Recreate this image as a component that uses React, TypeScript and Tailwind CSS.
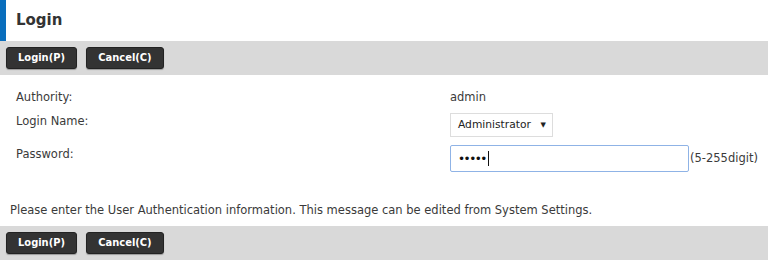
export default function App() {
  const btn =
    "h-[22px] rounded-[3px] bg-[#333333] text-white text-[11px] font-bold border border-[#222] shadow-[0_1px_1px_rgba(0,0,0,0.3)]";

  const ButtonBar = () => (
    <div className="flex items-center gap-[9px] bg-[#d9d9d9] h-[34px] px-[6px]">
      <button className={`${btn} w-[71px]`} style={{ fontFamily: '"DejaVu Sans Condensed", "DejaVu Sans", sans-serif' }}>
        Login(P)
      </button>
      <button className={`${btn} w-[78px]`} style={{ fontFamily: '"DejaVu Sans Condensed", "DejaVu Sans", sans-serif' }}>
        Cancel(C)
      </button>
    </div>
  );

  return (
    <div
      className="w-[768px] h-[260px] bg-white text-[#3a3a3a] text-[11.5px] overflow-hidden"
      style={{ fontFamily: '"DejaVu Sans", Verdana, sans-serif' }}
    >
      {/* Header */}
      <div className="flex items-center h-[41px] border-l-[6px] border-[#0a6ebd] pl-[10px]">
        <h1 className="text-[15px] font-bold text-[#333]">Login</h1>
      </div>

      <ButtonBar />

      {/* Form */}
      <div className="pl-[16px] pt-[15px] flex flex-col gap-[8px]">
        <div className="grid grid-cols-[434px_1fr] items-center h-[15px] leading-[15px]">
          <div>Authority:</div>
          <div>admin</div>
        </div>
        <div className="grid grid-cols-[434px_1fr] items-start h-[24px]">
          <div className="leading-[15px] pt-[1px]">Login Name:</div>
          <div className="flex items-center w-[103px] h-[24px] border border-[#ddd] pl-[7px] pr-[6px] text-[#222]">
            <span className="text-[10.7px]">Administrator</span>
            <span className="ml-auto text-[7px]">▼</span>
          </div>
        </div>
        <div className="grid grid-cols-[434px_1fr] items-start h-[27px]">
          <div className="leading-[15px] pt-[2px]">Password:</div>
          <div className="flex items-center">
            <div className="flex items-center w-[239px] h-[27px] border border-[#8fb3e6] rounded-[2px] pl-[7px] text-[#111]">
              <span className="text-[12px] tracking-[-1.5px] leading-none">•••••</span>
              <span className="w-px h-[15px] bg-[#111] ml-[2px]" />
            </div>
            <span className="ml-px">(5-255digit)</span>
          </div>
        </div>
      </div>

      <p className="pl-[10px] mt-[31px] h-[23px] leading-[15px]">
        Please enter the User Authentication information. This message can be edited from System Settings.
      </p>

      <ButtonBar />
    </div>
  );
}
